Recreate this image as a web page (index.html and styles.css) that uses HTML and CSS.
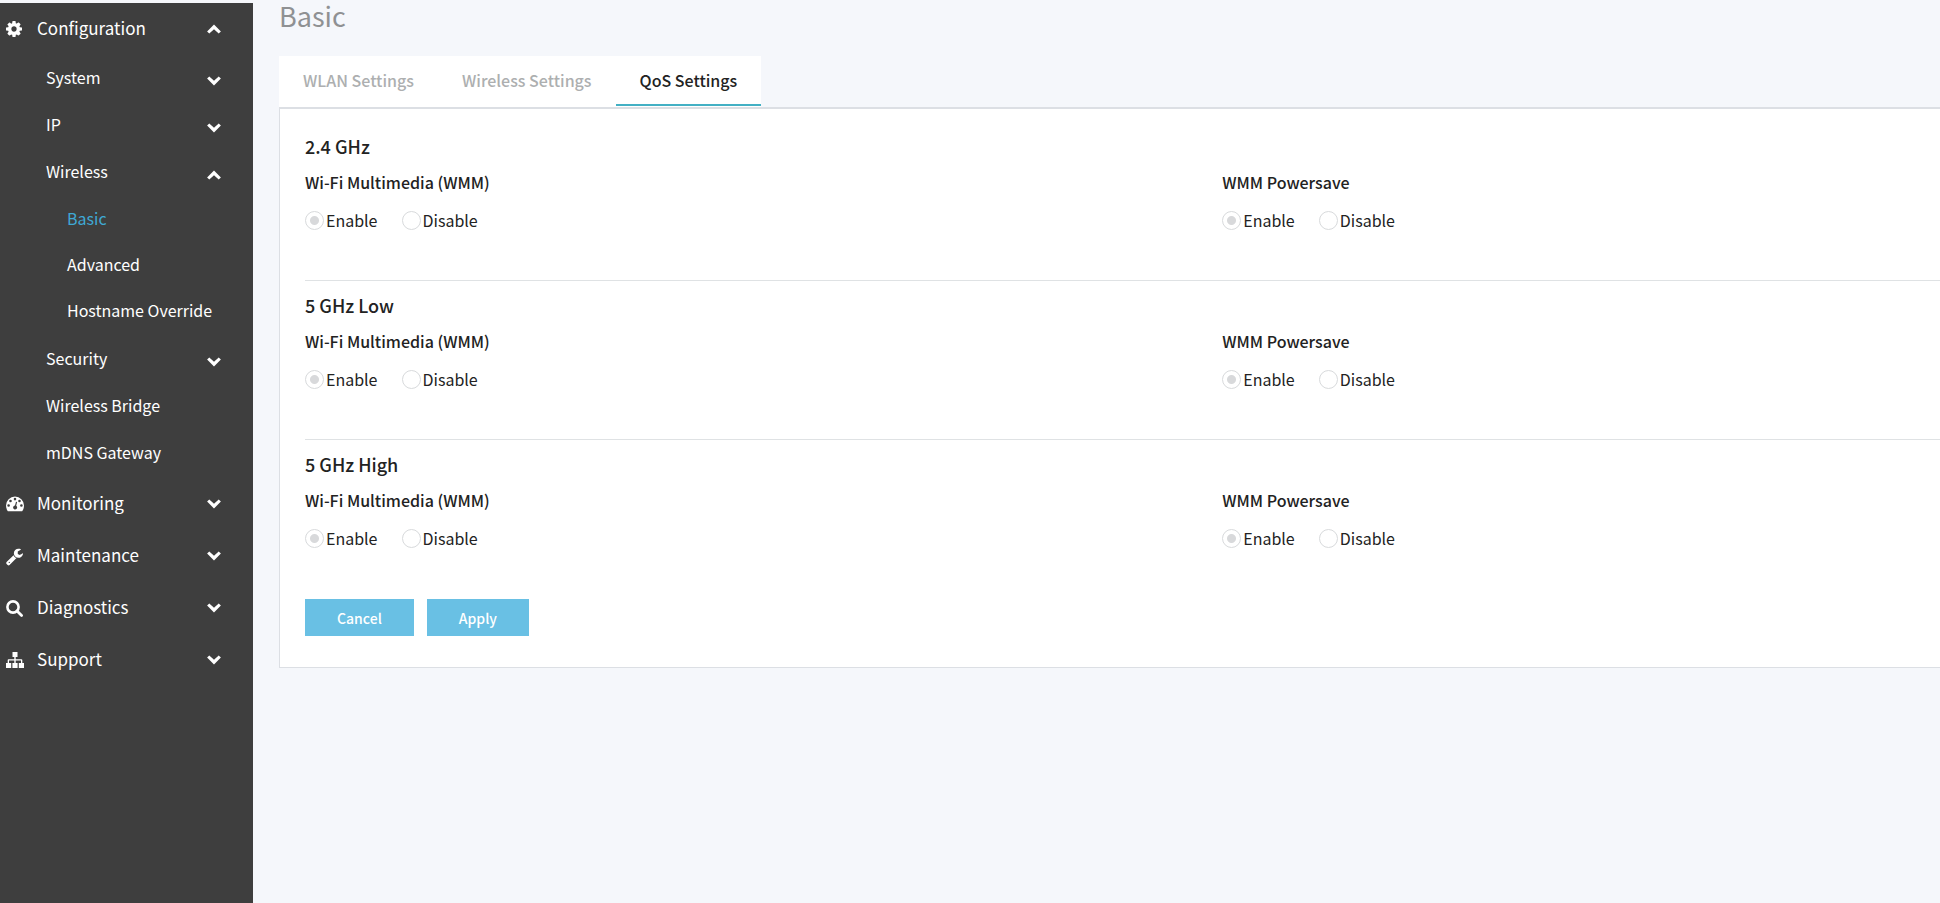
FILE: index.html
```html
<!DOCTYPE html>
<html lang="en">
<head>
<meta charset="utf-8">
<title>Basic - QoS Settings</title>
<link rel="stylesheet" href="styles.css">
</head>
<body>
<svg class="sprite" aria-hidden="true">
  <symbol id="down" viewBox="0 0 14 10"><path d="M2.3 0.4 7 4.8 11.7 0.4 13.9 2.6 7 9.4 0.1 2.6z"/></symbol>
  <symbol id="up" viewBox="0 0 14 10"><path d="M2.3 9.6 7 5.2 11.7 9.6 13.9 7.4 7 0.6 0.1 7.4z"/></symbol>
</svg>
<div class="app">
  <nav class="sidebar" aria-label="Main menu">
    <ul class="menu">
      <li>
        <a class="item" href="#"><svg class="icon" viewBox="0 0 1536 1536"><path d="M1024 768q0-106-75-181t-181-75-181 75-75 181 75 181 181 75 181-75 75-181zm512-109v222q0 12-8 23t-20 13l-185 28q-19 54-39 91 35 50 107 138 10 12 10 25t-9 23q-27 37-99 108t-94 71q-12 0-26-9l-138-108q-44 23-91 38-16 136-29 186-7 28-36 28H657q-14 0-24.500-8.500T621 1506l-28-184q-49-16-90-37l-141 107q-10 9-25 9-14 0-25-11-126-114-165-168-7-10-7-23 0-12 8-23 15-21 51-66.500t54-70.500q-27-50-41-99L29 913q-13-2-21-12.500T0 877V655q0-12 8-23t19-13l186-28q14-46 39-92-40-57-107-138-10-12-10-24 0-10 9-23 26-36 98.500-107.500T337 135q13 0 26 10l138 107q44-23 91-38 16-136 29-186 7-28 36-28h222q14 0 24.500 8.500T915 30l28 184q49 16 90 37l142-107q9-9 24-9 13 0 25 10 129 119 165 170 7 8 7 22 0 12-8 23-15 21-51 66.500t-54 70.500q26 50 41 98l183 28q13 2 21 12.500t8 23.500z"/></svg><span class="label">Configuration</span><svg class="chevron"><use href="#up"/></svg></a>
        <ul class="sub">
          <li><a class="item" href="#"><span class="label">System</span><svg class="chevron"><use href="#down"/></svg></a></li>
          <li><a class="item" href="#"><span class="label">IP</span><svg class="chevron"><use href="#down"/></svg></a></li>
          <li>
            <a class="item" href="#"><span class="label">Wireless</span><svg class="chevron"><use href="#up"/></svg></a>
            <ul class="leaf">
              <li><a class="item current" href="#" aria-current="page"><span class="label">Basic</span></a></li>
              <li><a class="item" href="#"><span class="label">Advanced</span></a></li>
              <li><a class="item" href="#"><span class="label">Hostname Override</span></a></li>
            </ul>
          </li>
          <li><a class="item" href="#"><span class="label">Security</span><svg class="chevron"><use href="#down"/></svg></a></li>
          <li><a class="item" href="#"><span class="label">Wireless Bridge</span></a></li>
          <li><a class="item" href="#"><span class="label">mDNS Gateway</span></a></li>
        </ul>
      </li>
      <li><a class="item" href="#"><svg class="icon wide" viewBox="0 0 18 15"><path fill-rule="evenodd" d="M9 0a9 9 0 0 0-9 9c0 2 .6 3.800 1.500 5.300.2.400.5.500.8.500h13.400c.3 0 .6-.1.800-.5A9.600 9.600 0 0 0 18 9a9 9 0 0 0-9-9zM2.600 7.700a1.300 1.300 0 1 1 0 2.600 1.300 1.300 0 0 1 0-2.600zM4.500 3.200a1.300 1.300 0 1 1 0 2.600 1.300 1.300 0 0 1 0-2.600zM9 1.300a1.300 1.300 0 1 1 0 2.600 1.300 1.300 0 0 1 0-2.600zM13.500 3.200a1.300 1.300 0 1 1 0 2.600 1.300 1.300 0 0 1 0-2.600zM15.400 7.700a1.300 1.300 0 1 1 0 2.600 1.300 1.300 0 0 1 0-2.600zM10 5.200l1.100.3-.9 3.800a2 2 0 1 1-1.200-.3z"/></svg><span class="label">Monitoring</span><svg class="chevron"><use href="#down"/></svg></a></li>
      <li><a class="item" href="#"><svg class="icon tool" viewBox="0 0 1664 1664"><path d="M384 1408q0-26-19-45t-45-19-45 19-19 45 19 45 45 19 45-19 19-45zm644-420-682 682q-37 37-90 37-52 0-91-37L59 1562q-38-36-38-90 0-53 38-91l681-681q39 98 114.500 173.500T1028 988zm634-435q0 39-23 106-47 134-164.500 217.500T1216 960q-185 0-316.500-131.500T768 512t131.500-316.500T1216 64q58 0 121.500 16.500T1445 127q16 11 16 28t-16 28l-293 169v224l193 107q5-3 79-48.500t135.500-81T1630 518q15 0 23.500 10t8.500 25z"/></svg><span class="label">Maintenance</span><svg class="chevron"><use href="#down"/></svg></a></li>
      <li><a class="item" href="#"><svg class="icon tool" viewBox="0 0 17 17"><circle cx="7" cy="7" r="5.600" fill="none" stroke="currentColor" stroke-width="2.600"/><path d="M11 11l4.600 4.600" stroke="currentColor" stroke-width="2.800" stroke-linecap="round"/></svg><span class="label">Diagnostics</span><svg class="chevron"><use href="#down"/></svg></a></li>
      <li><a class="item" href="#"><svg class="icon wide" viewBox="0 0 18 16"><path d="M6.500 0h5v5H9.700v2.300h5.800a.8.800 0 0 1 .8.800V11H18v5h-5.200v-5h2.200V8.600H9.700V11h1.900v5H6.400v-5h1.900V8.600H3V11h2.200v5H0v-5h1.700V8.100c0-.5.400-.8.800-.8h5.800V5H6.500z"/></svg><span class="label">Support</span><svg class="chevron"><use href="#down"/></svg></a></li>
    </ul>
  </nav>
  <main class="main">
    <h1 class="title">Basic</h1>
    <div class="tabs" role="tablist">
      <button class="tab" role="tab" type="button">WLAN Settings</button>
      <button class="tab" role="tab" type="button">Wireless Settings</button>
      <button class="tab active" role="tab" type="button" aria-selected="true">QoS Settings</button>
    </div>
    <form class="panel">
      <section class="band">
        <h2 class="band-title">2.4 GHz</h2>
        <div class="fields">
          <fieldset class="field" disabled><legend class="legend">Wi-Fi Multimedia (WMM)</legend><div class="options"><label class="option"><input class="radio" type="radio" name="wmm24" checked>Enable</label><label class="option"><input class="radio" type="radio" name="wmm24">Disable</label></div></fieldset>
          <fieldset class="field" disabled><legend class="legend">WMM Powersave</legend><div class="options"><label class="option"><input class="radio" type="radio" name="ps24" checked>Enable</label><label class="option"><input class="radio" type="radio" name="ps24">Disable</label></div></fieldset>
        </div>
      </section>
      <section class="band">
        <h2 class="band-title">5 GHz Low</h2>
        <div class="fields">
          <fieldset class="field" disabled><legend class="legend">Wi-Fi Multimedia (WMM)</legend><div class="options"><label class="option"><input class="radio" type="radio" name="wmm5l" checked>Enable</label><label class="option"><input class="radio" type="radio" name="wmm5l">Disable</label></div></fieldset>
          <fieldset class="field" disabled><legend class="legend">WMM Powersave</legend><div class="options"><label class="option"><input class="radio" type="radio" name="ps5l" checked>Enable</label><label class="option"><input class="radio" type="radio" name="ps5l">Disable</label></div></fieldset>
        </div>
      </section>
      <section class="band">
        <h2 class="band-title">5 GHz High</h2>
        <div class="fields">
          <fieldset class="field" disabled><legend class="legend">Wi-Fi Multimedia (WMM)</legend><div class="options"><label class="option"><input class="radio" type="radio" name="wmm5h" checked>Enable</label><label class="option"><input class="radio" type="radio" name="wmm5h">Disable</label></div></fieldset>
          <fieldset class="field" disabled><legend class="legend">WMM Powersave</legend><div class="options"><label class="option"><input class="radio" type="radio" name="ps5h" checked>Enable</label><label class="option"><input class="radio" type="radio" name="ps5h">Disable</label></div></fieldset>
        </div>
      </section>
      <div class="actions">
        <button class="btn" type="button">Cancel</button>
        <button class="btn" type="button">Apply</button>
      </div>
    </form>
  </main>
</div>
</body>
</html>
```
FILE: styles.css
```css
* { box-sizing: border-box; }
body {
  margin: 0;
  background: #f5f7fb;
  color: #222;
  font: 16px/24px "Noto Sans CJK SC", "Open Sans", sans-serif;
}
ul { margin: 0; padding: 0; list-style: none; }
.sprite { display: none; }
.app { display: flex; min-height: 100vh; padding-top: 3px; }

.sidebar { flex: 0 0 253px; background: #3e3e3e; color: #fff; }
.item {
  display: flex;
  align-items: center;
  height: 52px;
  padding: 0 32px 0 6px;
  color: inherit;
  font-size: 17px;
  text-decoration: none;
}
.icon { width: 16px; height: 16px; margin-right: 15px; fill: currentColor; overflow: visible; }
.icon.wide { width: 18px; margin-right: 13px; }
.icon.tool { width: 17px; height: 17px; margin-right: 14px; }
.label { flex: 1; padding-bottom: 2px; }
.chevron { width: 14px; height: 10px; fill: currentColor; }
.sub { padding-bottom: 1px; }
.sub .item { height: 47px; padding-left: 46px; font-size: 16px; }
.sub .label { padding-bottom: 4px; }
.sub .chevron { margin-top: 4px; }
.leaf { padding-bottom: 2px; }
.leaf .item { height: 46px; padding-left: 67px; }
.leaf .label { padding-bottom: 2px; }
.current { color: #3fa9d5; }

.main { flex: 1; min-width: 0; padding-left: 26px; }
.title { margin: 0 0 27px; color: #8f9193; font-size: 27px; font-weight: 400; line-height: 26px; }
.tabs { display: flex; width: fit-content; padding-bottom: 1px; background: #fff; }
.tab {
  height: 50px;
  padding: 0 24px;
  border: 0;
  border-bottom: 2px solid transparent;
  background: none;
  color: #adafb0;
  font: 500 16px/24px "Noto Sans CJK SC", "Open Sans", sans-serif;
}
.tab.active { border-color: #43b0c4; color: #222; }
.panel {
  padding: 23px 0 31px 25px;
  border: solid #dcdfe4;
  border-width: 2px 0 1px 1px;
  background: #fff;
}
.band { padding-bottom: 48px; }
.band + .band { padding-top: 10px; border-top: 1px solid #dfe2e4; }
.band-title { margin: 0 0 10px; font-size: 18px; font-weight: 500; line-height: 28px; }
.fields { display: grid; grid-template-columns: 561fr 439fr; }
.field { min-width: 0; margin: 0; padding: 0; border: 0; }
.legend { margin: 0 0 14px; padding: 0; font-weight: 500; }
.options { display: flex; gap: 24px; }
.option { display: flex; align-items: center; gap: 2px; }
.radio {
  appearance: none;
  width: 19px;
  height: 19px;
  margin: 0;
  border: 1px solid #d8dadc;
  border-radius: 50%;
  background: #fff;
}
.radio:checked { background: radial-gradient(circle, #d8d9db 4px, #fff 5px); }
.actions { display: flex; gap: 13px; padding-top: 1px; }
.btn {
  height: 37px;
  padding: 0 32px;
  border: 0;
  background: #69c0e4;
  color: #fff;
  font: 500 14px/24px "Noto Sans CJK SC", "Open Sans", sans-serif;
}
```
